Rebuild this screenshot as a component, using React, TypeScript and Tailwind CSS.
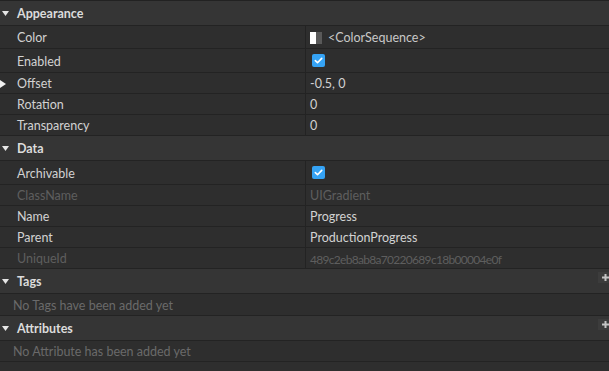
import React from "react";

type Prop = {
  name: string;
  value?: React.ReactNode;
  disabled?: boolean;
  expandable?: boolean;
  h: string;
};

const Check = () => (
  <span className="ml-[2px] flex h-[13px] w-[13px] items-center justify-center rounded-[2px] bg-[#35a3f5]">
    <svg width="9" height="9" viewBox="0 0 10 10" fill="none">
      <path d="M1.5 5.2l2.4 2.3L8.6 2.6" stroke="#fff" strokeWidth="1.8" strokeLinecap="round" strokeLinejoin="round" />
    </svg>
  </span>
);

const Caret = () => (
  <svg width="7" height="5" viewBox="0 0 7 5" className="ml-[2px]">
    <path d="M0 0h7L3.5 5z" fill="#e6e6e6" />
  </svg>
);

const Header = ({ title, add }: { title: string; add?: boolean }) => (
  <div className="relative flex h-[25px] shrink-0 items-center border-b border-[#232323] bg-[#353535]">
    <Caret />
    <span className="ml-[8px] pt-[2px] text-[12.5px] font-bold text-[#dcdcdc]">{title}</span>
    {add && (
      <span className="absolute right-0 top-[3px] flex h-[11px] w-[11px] items-center justify-end bg-[#3c3c3c]">
        <svg width="7" height="7" viewBox="0 0 7 7">
          <path d="M3.5 0v7M0 3.5h7" stroke="#c4c4c4" strokeWidth="2" />
        </svg>
      </span>
    )}
  </div>
);

const Row = ({ p }: { p: Prop }) => (
  <div className={`relative flex shrink-0 border-b border-[#232323] bg-[#2e2e2e] ${p.h}`}>
    {p.expandable && (
      <svg width="6" height="8" viewBox="0 0 6 8" className="absolute left-0 top-[7px]">
        <path d="M0 0l6 4-6 4z" fill="#f0f0f0" />
      </svg>
    )}
    <div
      className={`flex w-[306px] items-center border-r border-[#232323] pl-[17px] pt-[3px] text-[12.5px] ${
        p.disabled ? "text-[#5e5e5e]" : "text-[#d2d2d2]"
      }`}
    >
      {p.name}
    </div>
    <div
      className={`flex flex-1 items-center pl-[4px] pt-[3px] text-[12.5px] ${
        p.disabled ? "text-[#5e5e5e]" : "text-[#d2d2d2]"
      }`}
    >
      {p.value}
    </div>
  </div>
);

const Empty = ({ text, h }: { text: string; h: string }) => (
  <div className={`flex shrink-0 items-center border-b border-[#232323] bg-[#2e2e2e] pl-[13px] pt-[3px] text-[12.5px] text-[#6a6a6a] ${h}`}>
    {text}
  </div>
);

const appearance: Prop[] = [
  {
    name: "Color",
    h: "h-[23px]",
    value: (
      <span className="flex items-center">
        <span className="-mt-[2px] h-[12px] w-[6px] bg-white" />
        <span className="-mt-[2px] h-[12px] w-[6px] bg-[#595959]" />
        <span className="ml-[6px] text-[#c8c8c8]">&lt;ColorSequence&gt;</span>
      </span>
    ),
  },
  { name: "Enabled", h: "h-[24px]", value: <span className="-mt-[3px]"><Check /></span> },
  { name: "Offset", h: "h-[21px]", value: "-0.5, 0", expandable: true },
  { name: "Rotation", h: "h-[21px]", value: "0" },
  { name: "Transparency", h: "h-[21px]", value: "0" },
];

const data: Prop[] = [
  { name: "Archivable", h: "h-[24px]", value: <span className="-mt-[3px]"><Check /></span> },
  { name: "ClassName", h: "h-[21px]", value: "UIGradient", disabled: true },
  { name: "Name", h: "h-[21px]", value: "Progress" },
  { name: "Parent", h: "h-[21px]", value: "ProductionProgress" },
  {
    name: "UniqueId",
    h: "h-[21px]",
    value: <span className="text-[12px] tracking-[-0.7px]">489c2eb8ab8a70220689c18b00004e0f</span>,
    disabled: true,
  },
];

export default function App() {
  return (
    <div
      className="flex h-[371px] w-[609px] flex-col overflow-hidden bg-[#2e2e2e] leading-none"
      style={{ fontFamily: "Lato, 'Liberation Sans', sans-serif" }}
    >
      <div className="h-[1px] shrink-0 bg-[#222]" />
      <Header title="Appearance" />
      {appearance.map((p) => (
        <Row key={p.name} p={p} />
      ))}
      <Header title="Data" />
      {data.map((p) => (
        <Row key={p.name} p={p} />
      ))}
      <Header title="Tags" add />
      <Empty text="No Tags have been added yet" h="h-[22px]" />
      <Header title="Attributes" add />
      <Empty text="No Attribute has been added yet" h="h-[21px]" />
      <div className="flex-1 bg-[#2e2e2e]" />
    </div>
  );
}
